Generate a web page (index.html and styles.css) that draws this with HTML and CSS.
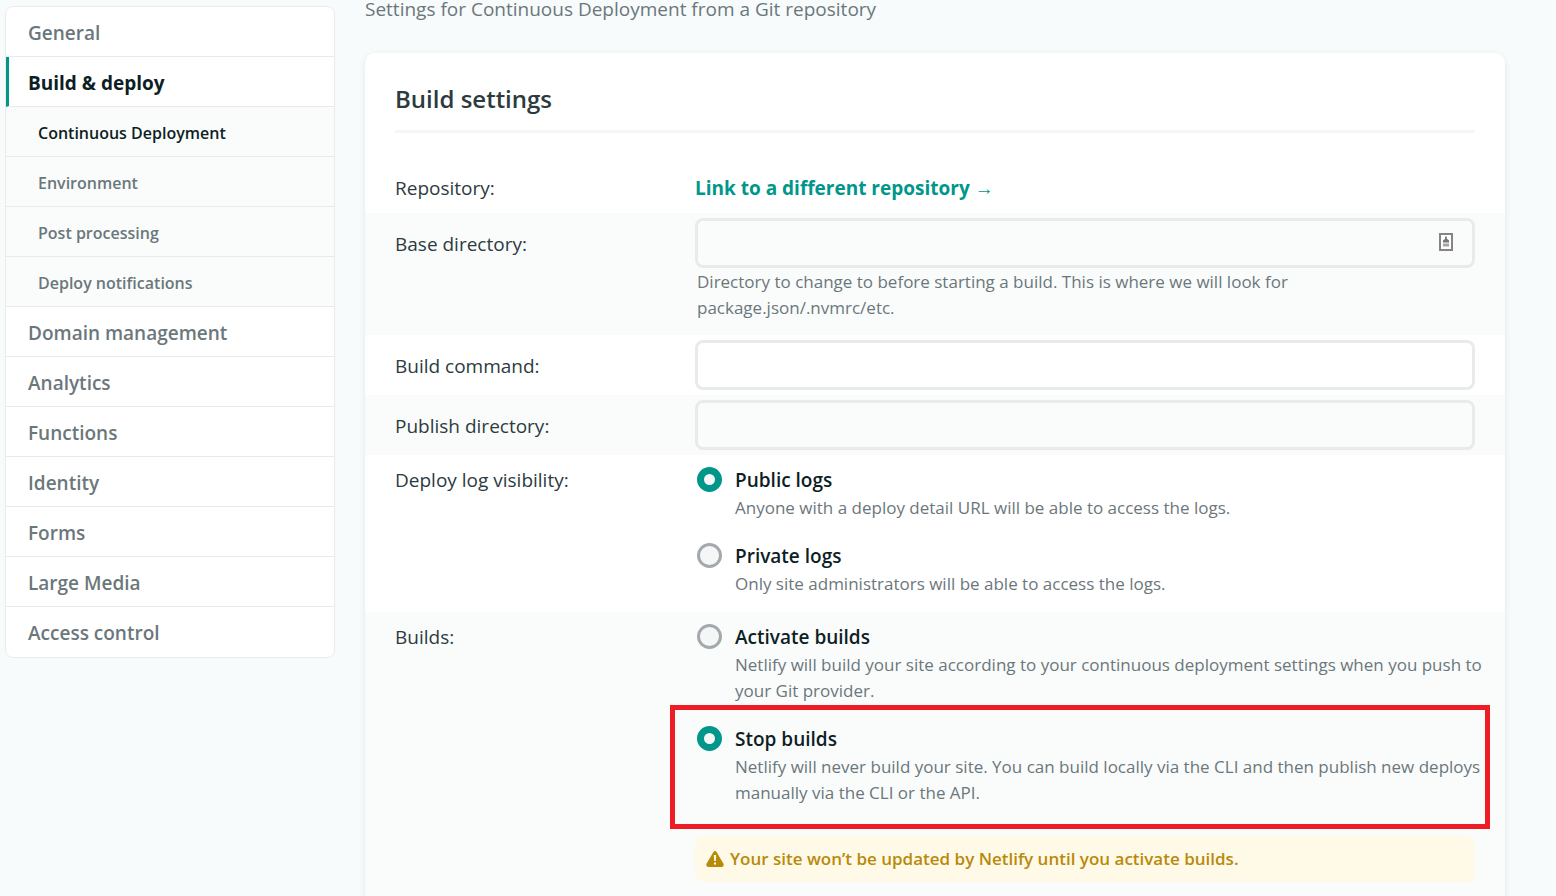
FILE: index.html
```
<!DOCTYPE html>
<html lang="en">
<head>
    <meta charset="UTF-8">
    <meta name="viewport" content="width=device-width, initial-scale=1.0">
    <title>Continuous Deployment settings</title>
    <link rel="stylesheet" href="styles.css">
</head>
<body>

    <div class="page">
        <nav class="sidebar">
            <a href="#">General</a>
            <a href="#" class="active">Build &amp; deploy</a>
            <a href="#" class="sub current">Continuous Deployment</a>
            <a href="#" class="sub">Environment</a>
            <a href="#" class="sub">Post processing</a>
            <a href="#" class="sub">Deploy notifications</a>
            <a href="#">Domain management</a>
            <a href="#">Analytics</a>
            <a href="#">Functions</a>
            <a href="#">Identity</a>
            <a href="#">Forms</a>
            <a href="#">Large Media</a>
            <a href="#">Access control</a>
        </nav>

        <main class="content">
            <p class="subtitle">Settings for Continuous Deployment from a Git repository</p>

            <form class="card">
                <h2>Build settings</h2>

                <div class="row">
                    <span class="name">Repository:</span>
                    <div class="value">
                        <a href="#" class="repo-link">Link to a different repository →</a>
                    </div>
                </div>

                <div class="row field">
                    <label class="name" for="baseDir">Base directory:</label>
                    <div class="value">
                        <div class="input-wrap">
                            <input type="text" id="baseDir" name="baseDir">
                            <svg class="autofill" width="16" height="20" viewBox="0 0 16 20">
                                <rect x="2" y="2" width="12" height="16" fill="#fff" stroke="#858585" stroke-width="2"/>
                                <path d="M8 4.500v3" stroke="#8a8a8a" stroke-width="2"/>
                                <path d="M5 10.500V8.500L8 6l3 2.500v2z" fill="#777"/>
                                <path d="M5 13h6" stroke="#a5a5a5" stroke-width="3"/>
                            </svg>
                        </div>
                        <p class="hint">Directory to change to before starting a build. This is where we will look for package.json/.nvmrc/etc.</p>
                    </div>
                </div>

                <div class="row field">
                    <label class="name" for="buildCmd">Build command:</label>
                    <div class="value">
                        <input type="text" id="buildCmd" name="buildCmd">
                    </div>
                </div>

                <div class="row field">
                    <label class="name" for="publishDir">Publish directory:</label>
                    <div class="value">
                        <input type="text" id="publishDir" name="publishDir">
                    </div>
                </div>

                <div class="row choices">
                    <span class="name">Deploy log visibility:</span>
                    <div class="value">
                        <div class="option">
                            <input type="radio" id="publicLogs" name="logs" checked>
                            <div>
                                <label for="publicLogs">Public logs</label>
                                <p>Anyone with a deploy detail URL will be able to access the logs.</p>
                            </div>
                        </div>
                        <div class="option">
                            <input type="radio" id="privateLogs" name="logs">
                            <div>
                                <label for="privateLogs">Private logs</label>
                                <p>Only site administrators will be able to access the logs.</p>
                            </div>
                        </div>
                    </div>
                </div>

                <div class="row choices">
                    <span class="name">Builds:</span>
                    <div class="value">
                        <div class="option">
                            <input type="radio" id="activateBuilds" name="builds">
                            <div>
                                <label for="activateBuilds">Activate builds</label>
                                <p>Netlify will build your site according to your continuous deployment settings when you push to your Git provider.</p>
                            </div>
                        </div>
                        <div class="option highlight">
                            <input type="radio" id="stopBuilds" name="builds" checked>
                            <div>
                                <label for="stopBuilds">Stop builds</label>
                                <p>Netlify will never build your site. You can build locally via the CLI and then publish new deploys manually via the CLI or the API.</p>
                            </div>
                        </div>
                        <div class="notice">
                            <svg width="18" height="16" viewBox="0 0 18 16">
                                <path d="M7.300 1.200Q9-1 10.700 1.200L17.500 12.800Q18.400 15.600 15.800 16H2.200Q-.4 15.600.5 12.800Z" fill="#b88a0a"/>
                                <path d="M7.800 4h2.400l-.3 6H8.100z" fill="#fff9e8"/>
                                <rect x="8" y="11.500" width="2" height="2" fill="#fff9e8"/>
                            </svg>
                            <span>Your site won’t be updated by Netlify until you activate builds.</span>
                        </div>
                    </div>
                </div>
            </form>
        </main>
    </div>

</body>
</html>
```

FILE: styles.css
```
* {
    box-sizing: border-box;
}

body {
    margin: 0;
    font-family: "Segoe UI", "Open Sans", sans-serif;
    font-size: 19px;
    line-height: 30px;
    background-color: #f7fbfc;
    color: #2d3b41;
}

h2, p {
    margin: 0;
}

.page {
    display: flex;
    align-items: flex-start;
    gap: 30px;
    padding: 0 51px 0 5px;
}

/* Sidebar */
.sidebar {
    flex: 0 0 330px;
    margin-top: 6px;
    background-color: #fff;
    border: 1px solid #e9ebeb;
    border-radius: 8px;
    overflow: hidden;
}

.sidebar a {
    display: block;
    padding: 11px 22px 8px;
    border-bottom: 1px solid #e9ebeb;
    color: #6b777b;
    font-weight: 600;
    text-decoration: none;
}

.sidebar a:last-child {
    padding-bottom: 9px;
    border-bottom: none;
}

.sidebar a.active {
    padding-left: 19px;
    border-left: 3px solid #00968a;
    color: #0e1e25;
    font-weight: 700;
}

.sidebar a.sub {
    padding-left: 32px;
    background-color: #fafcfb;
    font-size: 16px;
}

.sidebar a.current {
    color: #0e1e25;
}

/* Main column */
.content {
    flex: 1;
    min-width: 0;
}

.subtitle {
    margin-bottom: 35px;
    line-height: 18px;
    color: #6b777b;
}

.card {
    padding-bottom: 30px;
    background-color: #fff;
    border-radius: 10px;
    box-shadow: 0 2px 6px rgba(14, 60, 70, 0.1);
}

h2 {
    margin: 0 30px 30px;
    padding: 31px 0 16px;
    border-bottom: 3px solid #f5f7f7;
    font-size: 24px;
    font-weight: 600;
    line-height: 30px;
}

.row {
    display: flex;
    padding: 10px 30px;
}

.row:nth-child(odd) {
    background-color: #fafcfb;
}

.name {
    flex: 0 0 300px;
}

.value {
    flex: 1;
    min-width: 0;
}

.repo-link {
    color: #00968a;
    font-weight: 700;
    text-decoration: none;
}

.field {
    padding-top: 5px;
    padding-bottom: 5px;
}

.field .name {
    padding-top: 11px;
}

.input-wrap {
    position: relative;
}

input[type="text"] {
    display: block;
    width: 100%;
    height: 50px;
    padding: 0 12px;
    border: 3px solid #e9ebeb;
    border-radius: 8px;
    background-color: transparent;
    font: inherit;
    color: inherit;
}

.autofill {
    position: absolute;
    top: 14px;
    right: 21px;
}

.hint {
    max-width: 640px;
    padding: 1px 2px 9px;
    font-size: 17px;
    line-height: 26px;
    color: #6b777b;
}

/* Radio rows */
.choices {
    padding-bottom: 15px;
}

.option {
    display: flex;
    gap: 13px;
    margin-right: -10px;
    padding-left: 2px;
}

.option + .option {
    margin-top: 20px;
}

.option label {
    display: block;
    color: #0e1e25;
    font-weight: 600;
}

.option p {
    font-size: 17px;
    line-height: 26px;
    color: #6b777b;
}

input[type="radio"] {
    flex: none;
    appearance: none;
    width: 25px;
    height: 25px;
    margin: 2px 0 0;
    border: 3px solid #a3a9ac;
    border-radius: 50%;
    background-color: #f5f7f7;
}

input[type="radio"]:checked {
    border: 7px solid #00968a;
}

.highlight {
    position: relative;
}

/* Red frame drawn over the option */
.highlight::after {
    content: "";
    position: absolute;
    top: -19px;
    right: -5px;
    bottom: -23px;
    left: -25px;
    border: 5px solid #ee1c25;
    pointer-events: none;
}

.notice {
    display: flex;
    align-items: center;
    gap: 6px;
    margin-top: 30px;
    padding: 8px 11px;
    border-radius: 8px;
    background-color: #fff9e8;
    color: #b88a0a;
    font-size: 17px;
    font-weight: 600;
}
```
